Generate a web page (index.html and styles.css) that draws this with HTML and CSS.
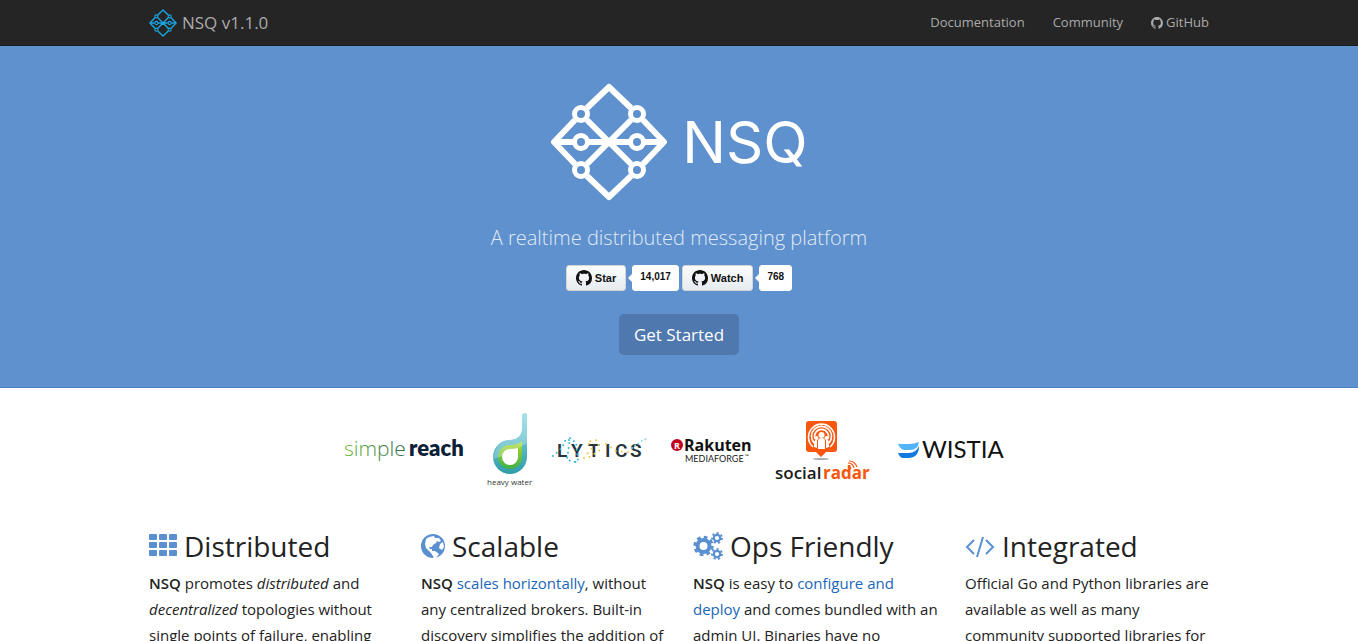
FILE: index.html
```
<!DOCTYPE html>
<html lang="en">
<head>
  <meta charset="UTF-8">
  <meta name="viewport" content="width=device-width, initial-scale=1.0">
  <title>NSQ - A realtime distributed messaging platform</title>
  <link rel="stylesheet" href="styles.css">
</head>
<body>
  <!-- shared shapes -->
  <svg class="defs" width="0" height="0" aria-hidden="true">
    <symbol id="nsq-mark" viewBox="0 0 118 118">
      <g fill="none" stroke="currentColor" stroke-width="6" stroke-linejoin="round">
        <path d="M37 25 59 4l22 21M93 37l21 22-21 22M81 93l-22 21-22-21M25 81 4 59l21-22"/>
        <path d="M37 37l44 44M81 37 37 81M4 59h19M39 59h40M95 59h19"/>
        <circle cx="31" cy="31" r="6.5" stroke-width="5"/>
        <circle cx="87" cy="31" r="6.5" stroke-width="5"/>
        <circle cx="31" cy="59" r="6.5" stroke-width="5"/>
        <circle cx="87" cy="59" r="6.5" stroke-width="5"/>
        <circle cx="31" cy="87" r="6.5" stroke-width="5"/>
        <circle cx="87" cy="87" r="6.5" stroke-width="5"/>
      </g>
    </symbol>
    <symbol id="github" viewBox="0 0 16 16">
      <path fill="currentColor" d="M8 0C3.58 0 0 3.58 0 8c0 3.54 2.29 6.53 5.47 7.59.4.07.55-.17.55-.38 0-.19-.01-.82-.01-1.49-2.01.37-2.53-.49-2.69-.94-.09-.23-.48-.94-.82-1.13-.28-.15-.68-.52-.01-.53.63-.01 1.08.58 1.23.82.72 1.21 1.87.87 2.33.66.07-.52.28-.87.51-1.07-1.78-.2-3.64-.89-3.64-3.95 0-.87.31-1.59.82-2.15-.08-.2-.36-1.02.08-2.12 0 0 .67-.21 2.2.82.64-.18 1.32-.27 2-.27.68 0 1.36.09 2 .27 1.53-1.04 2.2-.82 2.2-.82.44 1.1.16 1.92.08 2.12.51.56.82 1.27.82 2.15 0 3.07-1.87 3.75-3.65 3.95.29.25.54.73.54 1.48 0 1.07-.01 1.93-.01 2.2 0 .21.15.46.55.38A8.013 8.013 0 0 0 16 8c0-4.42-3.58-8-8-8z"/>
    </symbol>
  </svg>

  <nav class="navbar">
    <div class="container navbar-inner">
      <a class="brand" href="#"><svg class="brand-mark"><use href="#nsq-mark"/></svg>NSQ v1.1.0</a>
      <div class="nav-links">
        <a href="#">Documentation</a>
        <a href="#">Community</a>
        <a href="#"><svg class="nav-icon"><use href="#github"/></svg>GitHub</a>
      </div>
    </div>
  </nav>

  <header class="hero">
    <h1 class="hero-logo"><svg class="hero-mark"><use href="#nsq-mark"/></svg>NSQ</h1>
    <p class="tagline">A realtime distributed messaging platform</p>
    <div class="gh-buttons">
      <a class="gh-btn" href="#"><svg class="gh-icon"><use href="#github"/></svg>Star</a>
      <a class="gh-count" href="#">14,017</a>
      <a class="gh-btn" href="#"><svg class="gh-icon"><use href="#github"/></svg>Watch</a>
      <a class="gh-count" href="#">768</a>
    </div>
    <a class="btn-start" href="#">Get Started</a>
  </header>

  <section class="logos">
    <a href="#">
      <svg width="124" height="80" viewBox="0 0 124 80">
        <defs>
          <linearGradient id="simple" x1="0" x2="1"><stop offset="0" stop-color="#6ab83c"/><stop offset="1" stop-color="#2c6a48"/></linearGradient>
        </defs>
        <text class="simple" x="0" y="46" fill="url(#simple)">simple</text>
        <text class="reach" x="65" y="46">reach</text>
      </svg>
    </a>
    <a href="#">
      <svg width="48" height="80" viewBox="0 0 48 80">
        <defs>
          <linearGradient id="drop" x1="0" y1="0" x2="0" y2="1"><stop offset="0" stop-color="#8ad8e2"/><stop offset="1" stop-color="#2f9dac"/></linearGradient>
          <linearGradient id="leaf" x1="0" y1="0" x2="0" y2="1"><stop offset="0" stop-color="#b0dc2c"/><stop offset="1" stop-color="#3fae49"/></linearGradient>
        </defs>
        <path fill="url(#drop)" d="M36 5q2-3 5-1v43a17 17 0 1 1-17-17q12-1 12-12z"/>
        <path fill="url(#leaf)" d="M36 31v16a12 12 0 1 1-12-12q8 0 12-4z"/>
        <path fill="#fff" d="M32 38v9a8 8 0 1 1-8-8q4 0 8-1z"/>
        <path fill="#fff" opacity=".25" d="M7 49q14-3 34-16V4l-5 1v13q0 11-12 12Q9 32 7 49z"/>
        <text class="heavy" x="1" y="75">heavy water</text>
      </svg>
    </a>
    <a href="#">
      <svg width="98" height="80" viewBox="0 0 98 80">
        <text class="lytics" x="5 19 36 53 63 78" y="47">LYTICS</text>
        <g fill="none" stroke-linecap="round" stroke-width="2">
          <path stroke="#35b5dc" stroke-dasharray="0 5" d="M1 46l9-8 4-9 10 3 2 20-7 0M18 28l-3 22 9 2"/>
          <path stroke="#8fd6ea" stroke-dasharray="0 4" d="M80 38l8-6 8-4"/>
          <path stroke="#f5c63a" stroke-dasharray="0 6" d="M32 48l8-10-5-6 10-2 3 10-12 8M54 34l10 7 12 1"/>
        </g>
      </svg>
    </a>
    <a href="#">
      <svg width="86" height="80" viewBox="0 0 86 80">
        <circle cx="9" cy="35" r="6" fill="#bf0021"/>
        <text class="rakuten-r" x="6" y="39">R</text>
        <text class="rakuten" x="16" y="41">Rakuten</text>
        <text class="mediaforge" x="17" y="52">MEDIAFORGE</text>
        <text class="tm" x="77" y="48">™</text>
      </svg>
    </a>
    <a href="#">
      <svg width="100" height="80" viewBox="0 0 100 80">
        <path fill="#f9560e" d="M37 11h25q3 0 3 3v25q0 3-3 3h-8l-5 5-5-5h-7q-3 0-3-3V14q0-3 3-3z"/>
        <g fill="none" stroke="#fff" stroke-width="1.6">
          <path d="M41 37a13 13 0 1 1 17 0"/>
          <path d="M42 33a10 10 0 1 1 15 0"/>
          <path d="M43 29a7 7 0 1 1 13 0"/>
        </g>
        <g fill="#fff">
          <circle cx="49.500" cy="25" r="3"/><circle cx="44.500" cy="28" r="2"/><circle cx="54.500" cy="28" r="2"/>
          <path d="M46 39V31q0-3 3.500-3t3.500 3v8zM42 37v-5q1-3 3-2v8zM57 37v-5q-1-3-3-2v8z"/>
        </g>
        <ellipse cx="49" cy="49" rx="8" ry="1" fill="#aaa"/>
        <text class="social" x="3" y="69">social</text>
        <text class="radar" x="51" y="69">radar</text>
        <path fill="none" stroke="#f9560e" stroke-width="1.200" d="M76 56q2 0 3 3M76 53q5 0 6 5M77 51q6 0 8 6"/>
      </svg>
    </a>
    <a href="#">
      <svg width="124" height="80" viewBox="0 0 124 80">
        <path fill="#54b4fa" d="M8 34h11q5 0 10-2-1 8-9 8h-6q-4-1-6-6z"/>
        <path fill="#1278e0" d="M29 36q0 12-11 12H13q-3 0-5-5h11q7 0 10-7z"/>
        <text class="wistia" x="32" y="48">WISTIA</text>
      </svg>
    </a>
  </section>

  <main class="container features">
    <article>
      <h2>
        <svg width="28" height="24" viewBox="0 0 28 24" fill="currentColor">
          <rect x="0" y="0" width="8" height="6" rx="1"/><rect x="10" y="0" width="8" height="6" rx="1"/><rect x="20" y="0" width="8" height="6" rx="1"/>
          <rect x="0" y="8" width="8" height="6" rx="1"/><rect x="10" y="8" width="8" height="6" rx="1"/><rect x="20" y="8" width="8" height="6" rx="1"/>
          <rect x="0" y="16" width="8" height="6" rx="1"/><rect x="10" y="16" width="8" height="6" rx="1"/><rect x="20" y="16" width="8" height="6" rx="1"/>
        </svg>Distributed</h2>
      <p><strong>NSQ</strong> promotes <em>distributed</em> and <em>decentralized</em> topologies without single points of failure, enabling</p>
    </article>
    <article>
      <h2>
        <svg width="24" height="24" viewBox="0 0 24 24">
          <circle cx="12" cy="12" r="12" fill="currentColor"/>
          <path fill="#fff" d="M5 5l3-2 5-1 1 2 4 0 2 3-2 1-2-1-1 2-3 2-1 2-3 0 1 2 2 0 0 2 3 0 4 3-2 3-3 3-1-4-2-3-3-3-2-2-1-4zM19 10l3-2 1 5-2 3-3-2z"/>
        </svg>Scalable</h2>
      <p><strong>NSQ</strong> <a href="#">scales horizontally</a>, without any centralized brokers. Built-in discovery simplifies the addition of</p>
    </article>
    <article>
      <h2>
        <svg width="30" height="28" viewBox="0 0 30 28" fill="none" stroke="currentColor">
          <circle cx="10.500" cy="14" r="6" stroke-width="4"/>
          <circle cx="10.500" cy="14" r="8.800" stroke-width="2.800" stroke-dasharray="3.700 3.211"/>
          <circle cx="24" cy="6" r="3.200" stroke-width="2.200"/>
          <circle cx="24" cy="6" r="5" stroke-width="1.800" stroke-dasharray="2.200 2.288"/>
          <circle cx="24" cy="22" r="3.200" stroke-width="2.200"/>
          <circle cx="24" cy="22" r="5" stroke-width="1.800" stroke-dasharray="2.200 2.288"/>
        </svg>Ops Friendly</h2>
      <p><strong>NSQ</strong> is easy to <a href="#">configure and deploy</a> and comes bundled with an admin UI. Binaries have no</p>
    </article>
    <article>
      <h2>
        <svg width="30" height="24" viewBox="0 0 30 24" fill="none" stroke="currentColor" stroke-width="2">
          <path d="M9 6 2 13l7 7M21 6l7 7-7 7M18 3l-6 20"/>
        </svg>Integrated</h2>
      <p>Official Go and Python libraries are available as well as many community supported libraries for</p>
    </article>
  </main>
</body>
</html>
```
FILE: styles.css
```
* {
  box-sizing: border-box;
}

body {
  margin: 0;
  font-family: "Open Sans", sans-serif;
  font-size: 15px;
  line-height: 26px;
  color: #222;
  background: #fff;
}

a {
  color: #1a66b8;
  text-decoration: none;
}

.defs {
  position: absolute;
}

.container {
  max-width: 1100px;
  margin: 0 auto;
  padding: 0 20px;
}

/* top bar */
.navbar {
  background: #252525;
  border-bottom: 1px solid #1c1c1c;
}

.navbar-inner {
  display: flex;
  justify-content: space-between;
  align-items: center;
  height: 45px;
}

.navbar a {
  color: #aaa;
}

.brand {
  display: flex;
  align-items: center;
  gap: 5px;
  font-size: 17px;
}

.brand-mark {
  width: 28px;
  height: 28px;
  color: #19a5e1;
}

.nav-links {
  display: flex;
  gap: 28px;
  padding-bottom: 2px;
  font-size: 13px;
}

.nav-icon {
  width: 12px;
  height: 12px;
  margin-right: 3px;
  vertical-align: -2px;
}

/* hero */
.hero {
  display: flex;
  flex-direction: column;
  align-items: center;
  padding: 37px 20px 32px;
  background: #5e91cd;
  border-bottom: 1px solid #4f84c4;
}

.hero-logo {
  display: flex;
  align-items: center;
  gap: 14px;
  margin: 0;
  font: 58px/118px Inter, "Liberation Sans", sans-serif;
  color: #fff;
}

.hero-mark {
  width: 118px;
  height: 118px;
}

.tagline {
  margin: 22px 0 12px;
  font-size: 20px;
  font-weight: 300;
  line-height: 30px;
  color: #e0eaf7;
}

.gh-buttons {
  display: flex;
  gap: 3px;
  font: bold 11px/24px "Liberation Sans", sans-serif;
}

.gh-btn,
.gh-count {
  display: flex;
  align-items: center;
  height: 26px;
  border: 1px solid #d5d5d5;
  border-radius: 3px;
  color: #111;
}

.gh-btn {
  gap: 3px;
  padding: 0 9px;
  background: linear-gradient(#fcfcfc, #e6ebf0);
}

.gh-icon {
  width: 16px;
  height: 16px;
}

.gh-count {
  position: relative;
  margin-left: 3px;
  padding: 0 7px 2px;
  font-size: 10px;
  background: #fff;
  border-color: #fff;
}

.gh-count::before {
  content: "";
  position: absolute;
  left: -5px;
  top: 8px;
  border: 4px solid transparent;
  border-left: 0;
  border-right-color: #fff;
}

.btn-start {
  margin-top: 23px;
  padding: 0 15px;
  font-size: 17px;
  line-height: 41px;
  color: #fff;
  background: #4f79ae;
  border-radius: 5px;
}

/* users */
.logos {
  display: flex;
  flex-wrap: wrap;
  justify-content: center;
  gap: 18px;
  padding: 22px 20px 36px;
}

.logos svg {
  display: block;
}

.simple {
  font: 300 21px "Open Sans", sans-serif;
}

.reach {
  font: 800 22px Lato, sans-serif;
  fill: #0c2038;
}

.heavy {
  font: 8px "Open Sans", sans-serif;
  fill: #333;
}

.lytics {
  font: 600 19px Roboto, sans-serif;
  fill: #26343b;
}

.rakuten-r {
  font: bold 9px "Open Sans", sans-serif;
  fill: #fff;
}

.rakuten {
  font: bold 16px "Open Sans", sans-serif;
  fill: #111;
}

.mediaforge {
  font: 9px Lato, sans-serif;
  fill: #222;
}

.tm {
  font: 5px Lato, sans-serif;
}

.social {
  font: 600 17px "Open Sans", sans-serif;
  fill: #1a1a1a;
}

.radar {
  font: bold 17px "Open Sans", sans-serif;
  fill: #f9560e;
}

.wistia {
  font: 24px Lato, sans-serif;
  fill: #111;
}

/* features */
.features {
  display: grid;
  grid-template-columns: repeat(4, 1fr);
  gap: 28px;
}

.features h2 {
  display: flex;
  align-items: center;
  gap: 7px;
  margin: 0 0 4px;
  font-size: 28px;
  font-weight: 400;
  line-height: 40px;
}

.features h2 svg {
  color: #5a8fd0;
}

.features p {
  margin: 0 -6px 0 0;
}

.features strong {
  font-weight: 600;
}

@media (max-width: 900px) {
  .features {
    grid-template-columns: repeat(2, 1fr);
  }
}
```
